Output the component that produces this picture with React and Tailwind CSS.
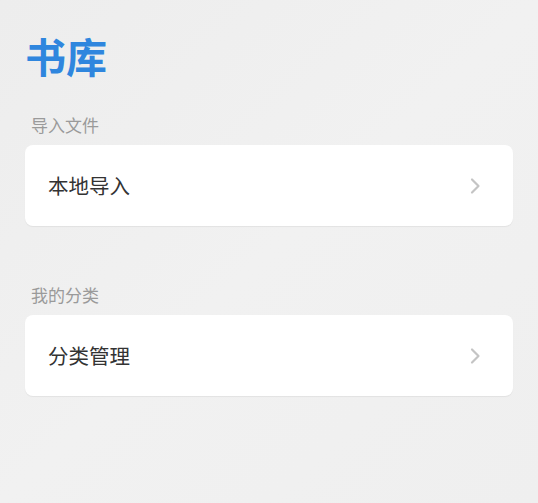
import React from 'react';

const sections = [
  { title: '导入文件', items: ['本地导入'] },
  { title: '我的分类', items: ['分类管理'] },
];

const Chevron = () => (
  <svg width="12" height="18" viewBox="0 0 12 18" fill="none" className="text-[#c4c4c4]">
    <path d="M3 2.5 L9.5 9 L3 15.5" stroke="currentColor" strokeWidth="2.2" strokeLinecap="round" strokeLinejoin="round" />
  </svg>
);

export default function App() {
  return (
    <div
      className="min-h-[503px] w-full bg-linear-to-br from-[#ededed] via-[#f1f1f1] to-[#efefef] px-[25px] pt-[30px]"
      style={{ fontFamily: '"Noto Sans CJK SC", "Noto Sans", sans-serif' }}
    >
      <h1 className="text-[41px] font-bold leading-[50px] text-[#2f86de]">书库</h1>

      <div className="mt-[34px] flex flex-col gap-[58px]">
        {sections.map((sec) => (
          <div key={sec.title}>
            <div className="ml-[6px] text-[17px] leading-[22px] text-[#9a9a9a]">{sec.title}</div>
            {sec.items.map((item) => (
              <div
                key={item}
                className="mt-[9px] flex h-[81px] items-center justify-between rounded-[8px] bg-white pl-[23px] pr-[32px] shadow-[0_1px_1px_rgba(0,0,0,0.06)]"
              >
                <span className="text-[20.5px] text-[#333333]">{item}</span>
                <Chevron />
              </div>
            ))}
          </div>
        ))}
      </div>
    </div>
  );
}
